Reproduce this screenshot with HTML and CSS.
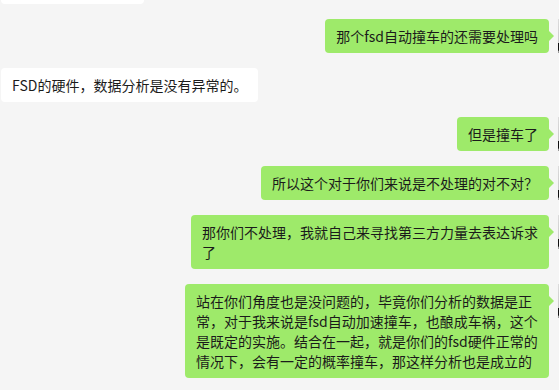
FILE: index.html
```html
<!DOCTYPE html>
<html lang="zh-CN">

<head>
    <meta charset="UTF-8">
    <meta name="viewport" content="width=device-width, initial-scale=1.0">
    <title>聊天记录</title>
    <link rel="stylesheet" href="styles.css">
</head>

<body>
    <div class="chat">
        <div class="row left">
            <div class="bubble white cut"></div>
        </div>

        <div class="row right">
            <div class="bubble green">那个fsd自动撞车的还需要处理吗</div>
            <div class="avatar"></div>
        </div>

        <div class="row left">
            <div class="bubble white">FSD的硬件，数据分析是没有异常的。</div>
        </div>

        <div class="row right">
            <div class="bubble green">但是撞车了</div>
            <div class="avatar"></div>
        </div>

        <div class="row right">
            <div class="bubble green">所以这个对于你们来说是不处理的对不对？</div>
            <div class="avatar"></div>
        </div>

        <div class="row right">
            <div class="bubble green narrow">那你们不处理，我就自己来寻找第三方力量去表达诉求了</div>
            <div class="avatar"></div>
        </div>

        <div class="row right">
            <div class="bubble green">站在你们角度也是没问题的，毕竟你们分析的数据是正常，对于我来说是fsd自动加速撞车，也酿成车祸，这个是既定的实施。结合在一起，就是你们的fsd硬件正常的情况下，会有一定的概率撞车，那这样分析也是成立的</div>
            <div class="avatar"></div>
        </div>
    </div>
</body>

</html>
```

FILE: styles.css
```css
html,
body {
    margin: 0;
    padding: 0;
    background-color: #f5f5f5;
    overflow: hidden;
}

body {
    font-family: "Noto Sans CJK SC", "Microsoft YaHei", sans-serif;
    font-size: 14px;
    line-height: 20px;
    color: #1b1b1b;
}

.chat {
    width: 594px;
    margin-top: -30px;
    display: flex;
    flex-direction: column;
    gap: 15px;
}

.row {
    display: flex;
    align-items: flex-start;
}

.row.left {
    justify-content: flex-start;
    padding-left: 1px;
}

.row.right {
    justify-content: flex-end;
    gap: 9px;
}

.bubble {
    position: relative;
    box-sizing: border-box;
    max-width: 364px;
    padding: 7px 11px;
    border-radius: 4px;
    word-break: break-all;
}

.bubble.narrow {
    max-width: 358px;
}

.bubble.white {
    background-color: #fff;
}

.bubble.cut {
    width: 143px;
    height: 34px;
}

.bubble.green {
    background-color: #9eea6a;
}

.bubble.green::after {
    content: "";
    position: absolute;
    top: 12px;
    right: -5px;
    border-top: 5px solid transparent;
    border-bottom: 5px solid transparent;
    border-left: 5px solid #9eea6a;
}

.avatar {
    flex: none;
    width: 36px;
    height: 34px;
    background: linear-gradient(#dcdcdc 0, #c8c8c8 70%, #111 72%, #111 92%, #9a9a9a 94%);
}
```
